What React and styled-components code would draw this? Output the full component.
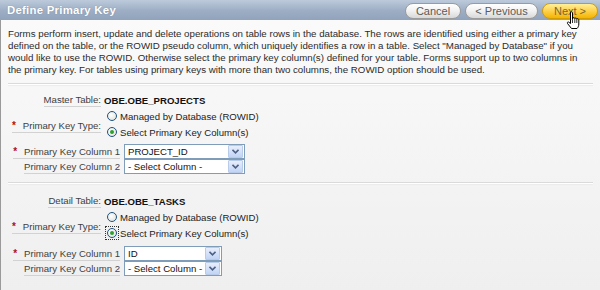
import React from "react";
import styled, { createGlobalStyle } from "styled-components";

const GlobalStyle = createGlobalStyle`
  html, body {
    margin: 0;
    padding: 0;
    background: #ffffff;
  }
  body {
    font-family: 'Liberation Sans', Arial, sans-serif;
  }
`

const Page = styled.div`
  position: relative;
  width: 600px;
  height: 290px;
  overflow: hidden;
  display: flex;
  flex-direction: column;
`

const Header = styled.div`
  display: flex;
  align-items: center;
  justify-content: space-between;
  height: 20px;
  padding: 0 2px 0 7px;
  background: linear-gradient(#bccadb, #9cadc4 55%, #91a3bb);
  flex-shrink: 0;
`

const Title = styled.div`
  color: #ffffff;
  font-weight: bold;
  font-size: 11.4px;
  letter-spacing: 0.25px;
  text-shadow: 0 0 1px #6f7f96;
`

const Buttons = styled.div`
  display: flex;
  gap: 4px;
  padding-top: 1px;
`

const Button = styled.div`
  display: flex;
  align-items: center;
  justify-content: center;
  height: 14px;
  width: ${p => p.w}px;
  border-radius: 8px;
  font-size: 11px;
  color: ${p => (p.primary ? "#7a6730" : "#5a5a5a")};
  border: 1px solid ${p => (p.primary ? "#d39c00" : "#9b9b9b")};
  background: ${p =>
    p.primary
      ? "linear-gradient(#ffef9a, #fdd14a 50%, #f5b400)"
      : "linear-gradient(#ffffff, #f1f1f1 50%, #d8d8d8)"};
`

const Body = styled.div`
  flex: 1;
  border-left: 1px solid #9a9a9a;
  background: linear-gradient(#fafafa, #efefef);
  padding: 0 7px;
`

const Intro = styled.p`
  margin: 8px 0 0 0;
  font-size: 9.72px;
  line-height: 12px;
  color: #2b2b2b;
`

const Separator = styled.div`
  height: 1px;
  margin: ${p => p.top}px 0 0 0;
  background: #dadada;
  border-bottom: 1px solid #ffffff;
  box-shadow: 0 1px 1px #ececec;
`

const Section = styled.div`
  display: flex;
  flex-direction: column;
  padding-top: ${p => p.top}px;
`

const Row = styled.div`
  display: flex;
  align-items: center;
  min-height: ${p => p.h || 15}px;
  margin-top: ${p => p.mt || 0}px;
`

const LabelCell = styled.div`
  width: ${p => p.w}px;
  display: flex;
  justify-content: flex-end;
  align-self: ${p => (p.low ? "flex-end" : "center")};
  margin-bottom: ${p => (p.low ? 7 : 0)}px;
  flex-shrink: 0;
`

const Label = styled.span`
  font-size: 9.6px;
  color: #404040;
  line-height: 13px;
  border-bottom: 1px solid #d2d2d2;
  white-space: nowrap;
`

const Star = styled.span`
  color: #b01010;
  font-weight: bold;
  font-size: 10px;
  margin-right: 7px;
`

const Value = styled.span`
  margin-left: 3px;
  font-size: 9.6px;
  font-weight: bold;
  color: #111;
`

const RadioGroup = styled.div`
  display: flex;
  flex-direction: column;
  margin-left: 5px;
`

const RadioLine = styled.div`
  display: flex;
  align-items: center;
  height: 16px;
  font-size: 9.6px;
  color: #222;
`

const RadioBox = styled.span`
  display: flex;
  align-items: center;
  justify-content: center;
  width: 12px;
  height: 12px;
  margin-right: 2px;
  outline: ${p => (p.focus ? "1px dotted #333" : "none")};
`

const RadioDot = styled.span`
  width: 10px;
  height: 10px;
  box-sizing: border-box;
  border-radius: 50%;
  border: 1px solid #1d5281;
  background: radial-gradient(circle at 40% 40%, #ffffff, #dcdcd6);
  display: flex;
  align-items: center;
  justify-content: center;
  &::after {
    content: "";
    display: ${p => (p.checked ? "block" : "none")};
    width: 4px;
    height: 4px;
    border-radius: 50%;
    background: #2fa02f;
  }
`

const Select = styled.div`
  display: flex;
  align-items: center;
  justify-content: space-between;
  box-sizing: border-box;
  width: ${p => p.w}px;
  height: 15px;
  margin-left: 4px;
  padding: 1px 1px 1px 3px;
  border: 1px solid #7f9db9;
  background: #ffffff;
  font-size: 9.6px;
  color: #111;
`

const Arrow = styled.span`
  display: flex;
  align-items: center;
  justify-content: center;
  width: 13px;
  height: 11px;
  border: 1px solid #b8cbe9;
  border-radius: 1px;
  background: linear-gradient(#e7eefc, #c2d4f5);
`

const Cursor = styled.svg`
  position: absolute;
  left: 566px;
  top: 11px;
`

const Radio = ({ checked, focus, children }) => (
  <RadioLine>
    <RadioBox focus={focus}>
      <RadioDot checked={checked} />
    </RadioBox>
    {children}
  </RadioLine>
)

const Dropdown = ({ w, children }) => (
  <Select w={w}>
    <span>{children}</span>
    <Arrow>
      <svg width="7" height="5" viewBox="0 0 7 5">
        <path d="M0.5 0.8 L3.5 3.8 L6.5 0.8" fill="none" stroke="#4d6185" strokeWidth="1.6" />
      </svg>
    </Arrow>
  </Select>
)

const TableSection = ({ top, kind, name, focus, selectWidth, col1, colTop }) => (
  <Section top={top}>
    <Row h={16}>
      <LabelCell w={93}>
        <Label>{kind} Table:</Label>
      </LabelCell>
      <Value>{name}</Value>
    </Row>
    <Row>
      <LabelCell w={93} low>
        <Label><Star>*</Star>Primary Key Type:</Label>
      </LabelCell>
      <RadioGroup>
        <Radio>Managed by Database (ROWID)</Radio>
        <Radio checked focus={focus}>Select Primary Key Column(s)</Radio>
      </RadioGroup>
    </Row>
    <Row mt={colTop}>
      <LabelCell w={112}>
        <Label><Star>*</Star>Primary Key Column 1</Label>
      </LabelCell>
      <Dropdown w={selectWidth}>{col1}</Dropdown>
    </Row>
    <Row>
      <LabelCell w={112}>
        <Label>Primary Key Column 2</Label>
      </LabelCell>
      <Dropdown w={selectWidth}>- Select Column -</Dropdown>
    </Row>
  </Section>
)

export default function App() {
  return (
    <Page>
      <GlobalStyle />
      <Header>
        <Title>Define Primary Key</Title>
        <Buttons>
          <Button w={54}>Cancel</Button>
          <Button w={71}>&lt; Previous</Button>
          <Button w={54} primary>Next &gt;</Button>
        </Buttons>
      </Header>
      <Body>
        <Intro>
          Forms perform insert, update and delete operations on table rows in the database. The rows are identified using either a primary key
          defined on the table, or the ROWID pseudo column, which uniquely identifies a row in a table. Select "Managed by Database" if you
          would like to use the ROWID. Otherwise select the primary key column(s) defined for your table. Forms support up to two columns in
          the primary key. For tables using primary keys with more than two columns, the ROWID option should be used.
        </Intro>
        <Separator top={7} />
        <TableSection top={7} kind="Master" name="OBE.OBE_PROJECTS" selectWidth={121} col1="PROJECT_ID" colTop={4} />
        <Separator top={8} />
        <TableSection top={9} kind="Detail" name="OBE.OBE_TASKS" focus selectWidth={98} col1="ID" colTop={5} />
      </Body>
      <Cursor width="16" height="20" viewBox="0 0 16 20">
        <path
          d="M4.5 1 C5.5 0.5 6.5 1 6.5 2 L6.5 8 L7 6.8 C8 6.4 8.8 6.8 8.8 7.6 L9 7.2 C10 6.8 10.8 7.3 10.8 8.1 L11 7.8 C12 7.5 12.8 8 12.8 9 L12.8 13 C12.8 15 12 16.5 11 17.5 L5.5 17.5 L1.5 12.5 C1 11.8 1.5 10.8 2.5 11 L4.5 12.5 L4.5 2 Z"
          fill="#ffffff"
          stroke="#000000"
          strokeWidth="1"
          strokeLinejoin="round"
        />
        <path d="M6.5 8 L6.5 12 M8.8 7.6 L8.8 12 M10.8 8.1 L10.8 12" stroke="#000" strokeWidth="0.8" />
      </Cursor>
    </Page>
  )
}
